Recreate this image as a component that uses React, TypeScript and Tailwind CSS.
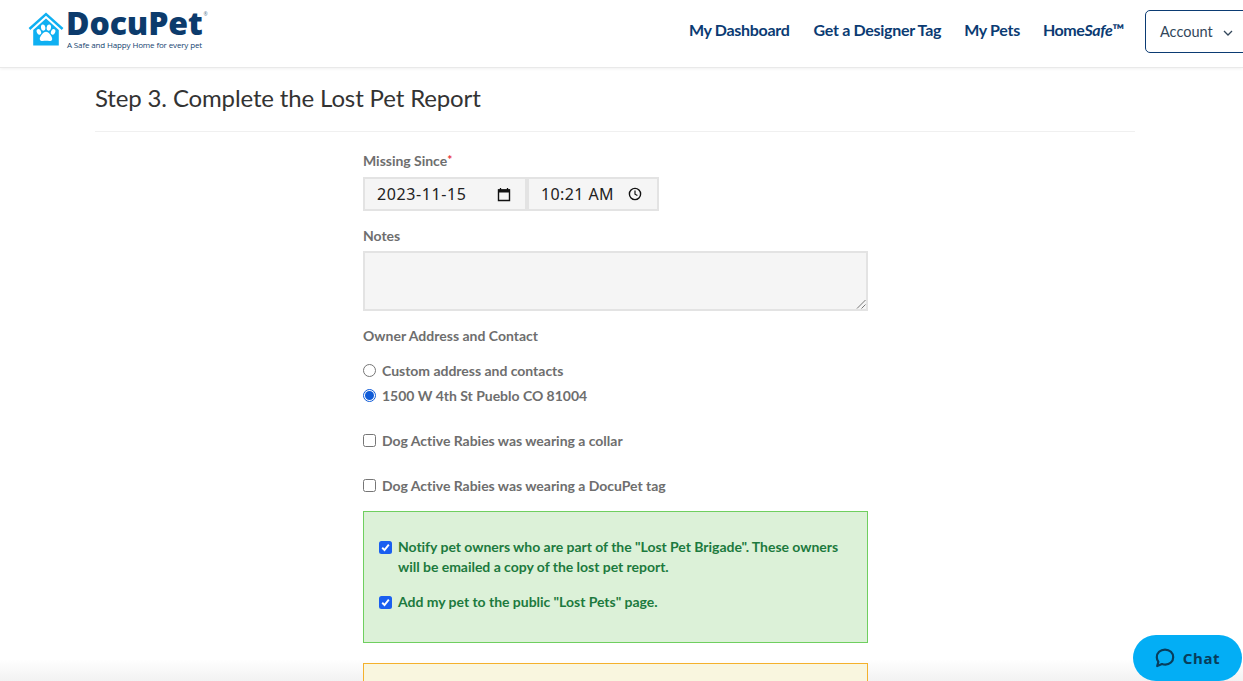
import * as React from 'react';

const navLinks = ['My Dashboard', 'Get a Designer Tag', 'My Pets'];

function Logo() {
  return (
    <div className="flex items-start">
      <svg width="36" height="35" viewBox="0 0 38 36" className="mt-[12px] shrink-0">
        <path d="M1.5 17.5 L19 1.8 L36.5 17.5" fill="none" stroke="#0fb0f2" strokeWidth="2.6" />
        <path d="M19 6.5 L32.5 18.5 V35 H5.5 V18.5 Z" fill="#0fb0f2" />
        <g fill="#fff">
          <ellipse cx="11.5" cy="20.5" rx="2.2" ry="3" transform="rotate(-25 11.5 20.5)" />
          <ellipse cx="16" cy="16" rx="2.3" ry="3.3" transform="rotate(-8 16 16)" />
          <ellipse cx="22" cy="16" rx="2.3" ry="3.3" transform="rotate(8 22 16)" />
          <ellipse cx="26.5" cy="20.5" rx="2.2" ry="3" transform="rotate(25 26.5 20.5)" />
          <path d="M19 20.5 C22 20.5 26 26 25.5 28.5 C25 31 21.5 30 19 30 C16.5 30 13 31 12.5 28.5 C12 26 16 20.5 19 20.5 Z" />
        </g>
      </svg>
      <div className="ml-[2px] flex flex-col">
        <div className="mt-[8px] flex h-[30px] items-start font-['Open_Sans',sans-serif] text-[32px] leading-[30px] font-extrabold tracking-[-0.1px] text-[#0c3b6c]">
          DocuPet
          <span className="mt-[3px] ml-[1px] text-[5px] leading-[6px] font-normal text-[#5d7891]">®</span>
        </div>
        <div className="mt-[1px] ml-[1px] font-['Open_Sans',sans-serif] text-[8px] leading-[12px] tracking-[-0.14px] text-[#14436f]">A Safe and Happy Home for every pet</div>
      </div>
    </div>
  );
}

function Header() {
  return (
    <header className="flex h-[68px] items-center justify-between border-b border-[#e9e9e9] bg-white pl-[28px] shadow-[0_1px_3px_rgba(0,0,0,0.06)]">
      <div className="-mt-[8px] h-[60px]">
        <Logo />
      </div>
      <nav className="flex items-center">
        <a className="mr-[24px] mb-[8px] text-[16px] font-bold tracking-[-0.3px] text-[#0b3b73]">{navLinks[0]}</a>
        <a className="mr-[23px] mb-[8px] text-[16px] font-bold tracking-[-0.3px] text-[#0b3b73]">{navLinks[1]}</a>
        <a className="mr-[23px] mb-[8px] text-[16px] font-bold tracking-[-0.3px] text-[#0b3b73]">{navLinks[2]}</a>
        <a className="mr-[21px] mb-[8px] text-[16px] font-bold tracking-[-0.41px] text-[#0b3b73]">
          Home<em>Safe</em>™
        </a>
        <div className="-mt-[4px] mr-[-8px] flex h-[43px] w-[106px] items-center rounded-[5px] border border-[#0b3b73] pl-[14px] text-[14.5px] text-[#33475b]">
          Account
          <svg width="10" height="6" viewBox="0 0 10 6" className="mt-[2px] ml-[10px]" fill="none" stroke="#33475b" strokeWidth="1.3">
            <path d="M1 1 L5 5 L9 1" />
          </svg>
        </div>
      </nav>
    </header>
  );
}

function Radio({ checked }: { checked?: boolean }) {
  return (
    <span className={`flex h-[13px] w-[13px] shrink-0 items-center justify-center rounded-full border bg-white ${checked ? 'border-[#0f5bd8]' : 'border-[#767676]'}`}>
      {checked && <span className="h-[9px] w-[9px] rounded-full bg-[#0f5bd8]" />}
    </span>
  );
}

function Check({ checked }: { checked?: boolean }) {
  if (checked) {
    return (
      <span className="flex h-[13px] w-[13px] shrink-0 items-center justify-center rounded-[2.5px] bg-[#1a5ff0]">
        <svg width="9" height="9" viewBox="0 0 9 9" fill="none" stroke="#fff" strokeWidth="1.9">
          <path d="M1.2 4.8 L3.5 7 L7.8 1.6" />
        </svg>
      </span>
    );
  }
  return <span className="h-[13px] w-[13px] shrink-0 rounded-[2.5px] border border-[#767676] bg-white" />;
}

function Option({ control, label, className }: { control: React.ReactNode; label: string; className?: string }) {
  return (
    <div className={`flex h-[20px] items-center gap-[6px] text-[14px] font-bold tracking-[-0.02px] text-[#6e6e6e] ${className ?? ''}`}>
      {control}
      <span>{label}</span>
    </div>
  );
}

const fieldClass = 'flex h-[34px] items-center border-2 border-[#e3e3e3] bg-[#f5f5f5] font-["Noto_Sans",sans-serif] text-[#222]';

export default function App() {
  return (
    <div className="relative h-[681px] overflow-hidden bg-white font-['Lato',sans-serif]">
      <div className="absolute right-0 bottom-0 left-0 h-[22px] bg-gradient-to-t from-[#f2f2f2] to-transparent" />
      <Header />
      <main className="relative pr-[108px] pl-[95px]">
        <h1 className="flex h-[64px] items-center border-b border-[#f0f0f0] pb-[4px] text-[24px] leading-none tracking-[-0.14px] text-[#333]">
          Step 3. Complete the Lost Pet Report
        </h1>
        <div className="ml-[268px] w-[505px]">
          <label className="mt-[19px] block h-[20px] text-[14px] leading-[20px] font-bold tracking-[-0.02px] text-[#6e6e6e]">
            Missing Since<sup className="top-[-2px] text-[12px] text-[#e8303a]">*</sup>
          </label>
          <div className="mt-[6px] flex">
            <div className={`${fieldClass} w-[164px] pr-[14px] pl-[12px] text-[16px]`}>
              <span className="flex-1 tracking-[0.6px]">2023-11-15</span>
              <svg width="14" height="15" viewBox="0 0 14 15" fill="none">
                <path d="M1.5 3 H12.5 V13.5 H1.5 Z" stroke="#111" strokeWidth="1.4" />
                <path d="M1 2.5 H13 V5.5 H1 Z" fill="#111" />
                <path d="M3.5 1 V3 M10.5 1 V3" stroke="#111" strokeWidth="1.3" />
              </svg>
            </div>
            <div className={`${fieldClass} w-[132px] pr-[15px] pl-[12px] text-[16px]`}>
              <span className="flex-1 tracking-[0.4px]">10:21 AM</span>
              <svg width="14" height="14" viewBox="0 0 14 14" fill="none" stroke="#111" strokeWidth="1.4">
                <circle cx="7" cy="7" r="5.6" />
                <path d="M7 3.6 V7.2 L9.4 8.6" strokeWidth="1.2" />
              </svg>
            </div>
          </div>
          <label className="mt-[15px] block h-[20px] text-[14px] leading-[20px] font-bold text-[#6e6e6e]">Notes</label>
          <div className="relative mt-[5px] h-[60px] border-2 border-[#e3e3e3] bg-[#f5f5f5]">
            <svg width="10" height="10" viewBox="0 0 10 10" className="absolute right-0 bottom-0" stroke="#777" strokeWidth="1" fill="none">
              <path d="M1 9.5 L9.5 1 M5.5 9.5 L9.5 5.5" />
            </svg>
          </div>
          <label className="mt-[15px] block h-[20px] text-[14px] leading-[20px] font-bold text-[#6e6e6e]">Owner Address and Contact</label>
          <Option className="mt-[14px]" control={<Radio />} label="Custom address and contacts" />
          <Option className="mt-[5px]" control={<Radio checked />} label="1500 W 4th St Pueblo CO 81004" />
          <Option className="mt-[25px]" control={<Check />} label="Dog Active Rabies was wearing a collar" />
          <Option className="mt-[25px]" control={<Check />} label="Dog Active Rabies was wearing a DocuPet tag" />
          <div className="mt-[16px] h-[132px] border border-[#6fcf5f] bg-[#dcf1d8] pt-[25px] pr-[15px] pl-[15px] text-[14px] leading-[20px] font-bold tracking-[-0.03px] text-[#1c7a3e]">
            <div className="flex gap-[6px]">
              <span className="mt-[4px]"><Check checked /></span>
              <span>Notify pet owners who are part of the "Lost Pet Brigade". These owners will be emailed a copy of the lost pet report.</span>
            </div>
            <div className="mt-[15px] flex gap-[6px]">
              <span className="mt-[4px]"><Check checked /></span>
              <span>Add my pet to the public "Lost Pets" page.</span>
            </div>
          </div>
          <div className="mt-[20px] h-[60px] border border-[#f4b12c] bg-[#f9f6df]" />
        </div>
      </main>
      <div className="absolute right-[1px] bottom-[0px] flex h-[46px] w-[109px] items-center justify-center gap-[8px] rounded-[23px] bg-[#03aef5] font-['Noto_Sans',sans-serif] text-[15px] font-bold tracking-[0.6px] text-[#083d5c]">
        <svg width="20" height="20" viewBox="0 0 20 20" fill="none" stroke="#083d5c" strokeWidth="2.2" strokeLinejoin="round">
          <path d="M10 1.6 C14.8 1.6 18.2 5 18.2 9.2 C18.2 13.6 14.6 16.6 10.4 16.6 C9 16.6 8 16.4 7 16 L2.2 18 L3.4 13.8 C2.4 12.4 1.8 10.9 1.8 9.2 C1.8 5 5.2 1.6 10 1.6 Z" />
        </svg>
        Chat
      </div>
    </div>
  );
}
